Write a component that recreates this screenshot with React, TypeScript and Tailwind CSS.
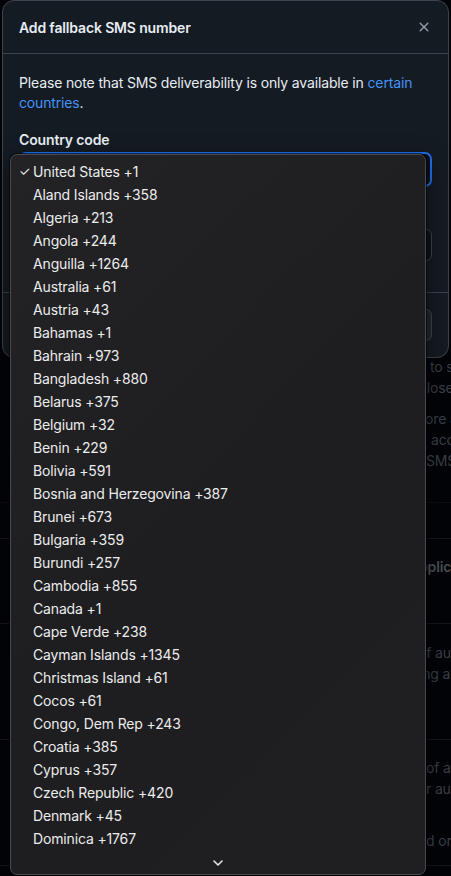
import React from "react";

const countries = [
  "United States +1",
  "Aland Islands +358",
  "Algeria +213",
  "Angola +244",
  "Anguilla +1264",
  "Australia +61",
  "Austria +43",
  "Bahamas +1",
  "Bahrain +973",
  "Bangladesh +880",
  "Belarus +375",
  "Belgium +32",
  "Benin +229",
  "Bolivia +591",
  "Bosnia and Herzegovina +387",
  "Brunei +673",
  "Bulgaria +359",
  "Burundi +257",
  "Cambodia +855",
  "Canada +1",
  "Cape Verde +238",
  "Cayman Islands +1345",
  "Christmas Island +61",
  "Cocos +61",
  "Congo, Dem Rep +243",
  "Croatia +385",
  "Cyprus +357",
  "Czech Republic +420",
  "Denmark +45",
  "Dominica +1767",
];

function BgLine({ pl, text, bold }: { pl: string; text: string; bold?: boolean }) {
  return (
    <div
      className={`${pl} h-[21px] leading-[21px] whitespace-nowrap text-[14px] ${
        bold ? "font-semibold text-[#4a5058]" : "text-[#3a3f47]"
      }`}
    >
      {text}
    </div>
  );
}

export default function App() {
  return (
    <div
      className="relative w-[451px] h-[876px] overflow-hidden bg-[#020408] tracking-[-0.15px]"
      style={{ fontFamily: "Inter, 'Noto Sans', 'Liberation Sans', sans-serif" }}
    >
      {/* Background page (dimmed) */}
      <div className="flex flex-col w-[900px]">
        <div className="h-[356px]" />
        <BgLine pl="pl-[430px]" text="to sign in" />
        <BgLine pl="pl-[419px]" text="closed" />
        <div className="h-[10px]" />
        <BgLine pl="pl-[413px]" text="more about" />
        <BgLine pl="pl-[431px]" text="account" />
        <BgLine pl="pl-[426px]" text="SMS" />
        <div className="h-[31px]" />
        <div className="h-px bg-[#0b0e13]" />
        <div className="h-[35px]" />
        <div className="h-px bg-[#14181e]" />
        <div className="h-[17px]" />
        <BgLine pl="pl-[409px]" text="Applications" bold />
        <div className="h-[46px]" />
        <div className="h-px bg-[#14181e]" />
        <div className="h-[18px]" />
        <BgLine pl="pl-[418px]" text="of auth" />
        <BgLine pl="pl-[419px]" text="ing a" />
        <div className="h-[55px]" />
        <div className="h-px bg-[#14181e]" />
        <div className="h-[17px]" />
        <BgLine pl="pl-[426px]" text="of auth" />
        <BgLine pl="pl-[426px]" text="r auth" />
        <div className="h-[31px]" />
        <BgLine pl="pl-[426px]" text="d or" />
        <div className="h-[14px]" />
        <div className="h-px bg-[#14181e]" />
      </div>

      {/* Modal dialog */}
      <div className="absolute left-[2px] top-0 w-[447px] flex flex-col rounded-[12px] border border-[#3d444d] bg-[#151b23]">
        <div className="h-[53px] flex items-center justify-between pl-4 pr-4 border-b border-[#3d444d]">
          <span className="text-[14px] font-semibold text-[#e6edf3]">Add fallback SMS number</span>
          <svg width="16" height="16" viewBox="0 0 16 16" fill="#9198a1">
            <path d="M3.72 3.72a.75.75 0 0 1 1.06 0L8 6.94l3.22-3.22a.749.749 0 0 1 1.275.326.749.749 0 0 1-.215.734L9.06 8l3.22 3.22a.749.749 0 0 1-.326 1.275.749.749 0 0 1-.734-.215L8 9.06l-3.22 3.22a.751.751 0 0 1-1.042-.018.751.751 0 0 1-.018-1.042L6.94 8 3.72 4.78a.75.75 0 0 1 0-1.06Z" />
          </svg>
        </div>
        <div className="h-[238px] flex flex-col px-4 pt-[19px]">
          <p className="text-[14px] leading-5 text-[#e6edf3]">
            Please note that SMS deliverability is only available in{" "}
            <span className="text-[#4493f8]">certain countries</span>.
          </p>
          <div className="mt-[17px] text-[14px] leading-5 font-semibold text-[#e6edf3]">Country code</div>
          <div className="mt-[2px] h-[35px] rounded-[7px] border-2 border-[#1f6feb] bg-[#0d1117]" />
          <div className="mt-4 text-[14px] leading-5 font-semibold text-[#e6edf3]">Phone number</div>
          <div className="mt-[6px] h-[32px] rounded-[6px] border border-[#3d444d] bg-[#0d1117]" />
        </div>
        <div className="border-t border-[#3d444d] p-4 flex justify-end gap-2">
          <div className="h-[32px] w-[80px] rounded-[6px] border border-[#3d444d] bg-[#212830]" />
        </div>
      </div>

      {/* Native select dropdown */}
      <div
        className="absolute left-[10px] top-[154px] w-[416px] h-[721px] rounded-[7px] border border-[#4a4a4d] bg-[#1f1f21] flex flex-col pt-[5px] shadow-[0_0_0_1px_rgba(0,0,0,0.6),0_8px_24px_rgba(0,0,0,0.5)]"
        style={{ backgroundImage: "linear-gradient(135deg, #232326 0%, #1e1e20 50%, #1f1f21 100%)" }}
      >
        {countries.map((c, i) => (
          <div key={c} className="h-[23px] flex items-center pl-[8px] text-[14px] text-[#ececec]">
            <span className="w-[14px] text-[13px] leading-none">{i === 0 ? "✓" : ""}</span>
            <span className="whitespace-nowrap">{c}</span>
          </div>
        ))}
        <div className="flex-1 flex items-end justify-center pb-[7px] pr-[1px]">
          <svg width="12" height="8" viewBox="0 0 12 8" fill="none" stroke="#e6e6e6" strokeWidth="1.6" strokeLinecap="round" strokeLinejoin="round">
            <path d="M2 2l4 4 4-4" />
          </svg>
        </div>
      </div>
    </div>
  );
}
